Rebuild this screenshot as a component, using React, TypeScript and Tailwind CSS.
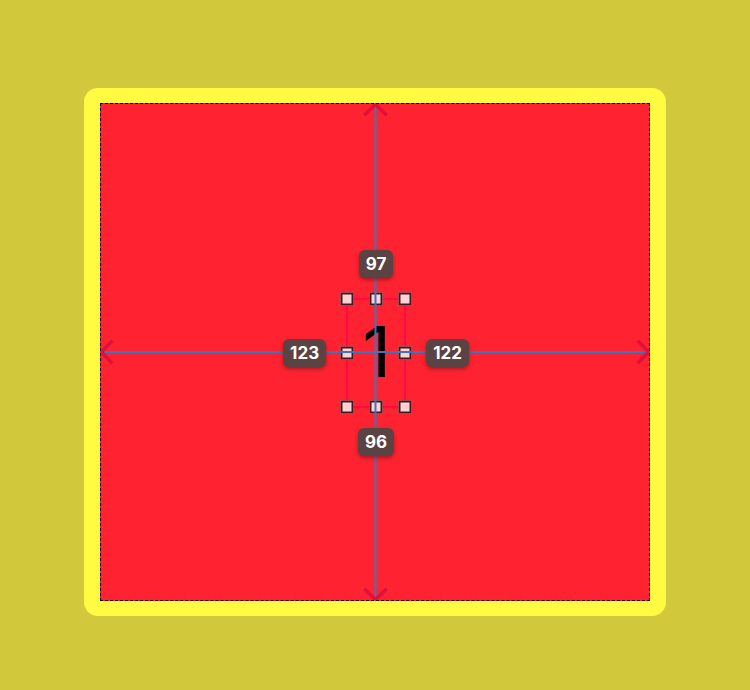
import React from "react";

const Handle = ({ pos }: { pos: string }) => (
  <div
    className={`absolute w-[13px] h-[13px] bg-[#ffd1d6] border-2 border-[#3b1d1d] -translate-x-1/2 -translate-y-1/2 ${pos}`}
  />
);

const Label = ({ text }: { text: string }) => (
  <div
    className="relative z-20 h-[28px] px-[7px] flex items-center justify-center rounded-md bg-[#5a4343] text-white font-bold text-[17px] leading-none shadow-[0_2px_4px_rgba(0,0,0,0.35)]"
    style={{ fontFamily: "Inter, 'Open Sans', sans-serif" }}
  >
    {text}
  </div>
);

export default function App() {
  const W = 548;
  const H = 496;
  const cx = 274.5;
  const cy = 248;
  return (
    <div className="w-[750px] h-[690px] bg-[#d1c93b] pt-[88px]">
      <div className="mx-auto w-[582px] h-[528px] rounded-[14px] bg-[#fffb43] px-[16px] py-[15px]">
        <div className="relative w-[550px] h-[498px] bg-[#ff2331] border border-dashed border-black flex items-center justify-center">
          <div className="flex flex-col items-center gap-[21px] pl-[2px] pt-[2px]">
            <Label text="97" />
            <div className="flex items-center gap-[21px]">
              <Label text="123" />
              <div className="relative w-[58px] h-[108px] outline-2 outline-[#ff0a44] -outline-offset-1 flex items-center justify-center">
                <span
                  className="text-black text-[70px] font-normal leading-none pl-[1px] pb-[2px]"
                  style={{ fontFamily: "Inter, 'Liberation Sans', sans-serif" }}
                >
                  1
                </span>
                <Handle pos="left-0 top-0" />
                <Handle pos="left-1/2 top-0" />
                <Handle pos="left-full top-0" />
                <Handle pos="left-0 top-1/2" />
                <Handle pos="left-full top-1/2" />
                <Handle pos="left-0 top-full" />
                <Handle pos="left-1/2 top-full" />
                <Handle pos="left-full top-full" />
              </div>
              <Label text="122" />
            </div>
            <Label text="96" />
          </div>
          <svg
            className="absolute inset-0 z-10 pointer-events-none"
            width={W}
            height={H}
            viewBox={`0 0 ${W} ${H}`}
          >
            <line x1={cx} y1={0} x2={cx} y2={H} stroke="#3a76bd" strokeWidth={2} />
            <line x1={0} y1={cy} x2={W} y2={cy} stroke="#3a76bd" strokeWidth={2} />
            <g stroke="#e0103a" strokeWidth={3.5} fill="none" strokeLinecap="square">
              <polyline points={`${cx - 10},10 ${cx},0.5 ${cx + 10},10`} />
              <polyline points={`${cx - 10},${H - 10} ${cx},${H - 0.5} ${cx + 10},${H - 10}`} />
              <polyline points={`10,${cy - 10} 0.5,${cy} 10,${cy + 10}`} />
              <polyline points={`${W - 10},${cy - 10} ${W - 0.5},${cy} ${W - 10},${cy + 10}`} />
            </g>
          </svg>
        </div>
      </div>
    </div>
  );
}
